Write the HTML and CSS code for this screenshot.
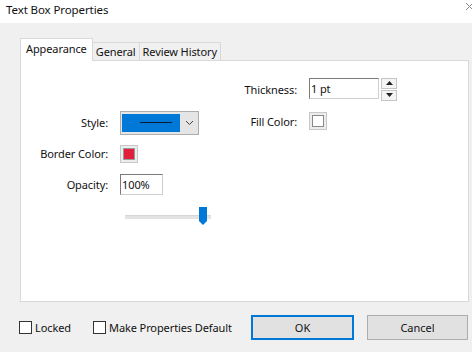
FILE: index.html
```html
<!DOCTYPE html>
<html>
<head>
<title>Text Box Properties</title>
<link rel="stylesheet" href="styles.css">
</head>
<body>

<div class="dialog">
  <div class="titlebar">
    <span class="title">Text Box Properties</span>
    <svg class="close" width="6" height="9" viewBox="0 0 6 9"><path d="M0 1 L7 8 M0 8 L7 1" stroke="#888" stroke-width="1" fill="none"/></svg>
  </div>

  <div class="content">
    <div class="tabs">
      <div class="tab active">Appearance</div>
      <div class="tab">General</div>
      <div class="tab">Review History</div>
    </div>

    <div class="panel">
      <div class="col left-col">
        <label>Style:</label>
        <div class="dropdown">
          <div class="line-preview"><span></span></div>
          <div class="chevron">
            <svg width="9" height="6" viewBox="0 0 9 6"><path d="M1 1 L4.5 4.5 L8 1" fill="none" stroke="#444" stroke-width="1"/></svg>
          </div>
        </div>

        <label>Border Color:</label>
        <div class="swatch"><span class="red"></span></div>

        <label>Opacity:</label>
        <input class="field opacity" type="text" value="100%">

        <span></span>
        <div class="slider">
          <div class="track"></div>
          <svg class="thumb" width="8" height="18" viewBox="0 0 8 18"><path d="M0 0 H8 V14 L4 18 L0 14 Z" fill="#0078d7"/></svg>
        </div>
      </div>

      <div class="col right-col">
        <label>Thickness:</label>
        <div class="spin">
          <input class="field thickness" type="text" value="1 pt">
          <div class="spin-btns">
            <div class="spin-btn"><svg width="7" height="4" viewBox="0 0 7 4"><path d="M0 4 L3.5 0 L7 4 Z" fill="#222"/></svg></div>
            <div class="spin-btn"><svg width="7" height="4" viewBox="0 0 7 4"><path d="M0 0 L3.5 4 L7 0 Z" fill="#222"/></svg></div>
          </div>
        </div>

        <label>Fill Color:</label>
        <div class="swatch"><span class="empty"></span></div>
      </div>
    </div>

    <div class="footer">
      <label class="check locked"><span class="box"></span>Locked</label>
      <label class="check"><span class="box"></span>Make Properties Default</label>
      <div class="buttons">
        <button class="btn default">OK</button>
        <button class="btn">Cancel</button>
      </div>
    </div>
  </div>
</div>

</body>
</html>
```

FILE: styles.css
```css
body {
  margin: 0;
  background: #fff;
  font-family: "Noto Sans", "Open Sans", sans-serif;
  font-size: 11px;
  letter-spacing: -0.1px;
  color: #111;
}

.dialog {
  width: 472px;
  height: 352px;
  display: flex;
  flex-direction: column;
  overflow: hidden;
}

.titlebar {
  height: 24px;
  background: #fff;
  display: flex;
  align-items: center;
  justify-content: space-between;
  padding-left: 6px;
}

.title { margin-top: -4px; font-size: 11.5px; }

.close {
  margin-top: -10px;
  flex-shrink: 0;
}

.content {
  flex: 1;
  background: #f0f0f0;
  padding: 16px 3px 0 20px;
}

.tabs {
  display: flex;
  align-items: flex-end;
  height: 21px;
}

.tab {
  height: 17px;
  line-height: 17px;
  padding: 0 3px;
  border: 1px solid #d9d9d9;
  border-bottom: none;
  background: #f0f0f0;
  margin-left: -1px;
}

.tab:first-child { margin-left: 0; }

.tab.active {
  height: 22px;
  line-height: 19px;
  padding: 0 5px;
  background: #fff;
  position: relative;
  z-index: 1;
  margin-bottom: -1px;
}

.panel {
  height: 240px;
  background: #fff;
  border: 1px solid #d9d9d9;
  display: flex;
  align-items: flex-start;
}

.col {
  display: grid;
  column-gap: 12px;
  align-items: center;
}

.col label { text-align: right; }

.left-col {
  grid-template-columns: 87px 78px;
  grid-auto-rows: 31px;
  padding-top: 46px;
}

.right-col {
  grid-template-columns: 99px auto;
  grid-auto-rows: 32px;
  padding-top: 12px;
}

.dropdown {
  width: 76px;
  height: 20px;
  border: 1px solid #adadad;
  background: #e5e5e5;
  display: flex;
  align-items: center;
  padding: 1px 0 1px 1px;
}

.line-preview {
  width: 58px;
  height: 18px;
  background: #0078d7;
  display: flex;
  align-items: center;
  justify-content: flex-end;
  padding-right: 8px;
  box-sizing: border-box;
}

.line-preview span {
  width: 32px;
  height: 1px;
  background: #0a1a2e;
}

.chevron {
  flex: 1;
  display: flex;
  justify-content: center;
  align-items: center;
}

.swatch {
  width: 18px;
  height: 18px;
  box-sizing: border-box;
  border: 1px solid #c8c8c8;
  background: #ececec;
  display: flex;
  align-items: center;
  justify-content: center;
}

.swatch span {
  width: 12px;
  height: 12px;
  box-sizing: border-box;
}

.swatch .red { background: #e0203a; border: 1px solid #9a9a9a; }
.swatch .empty { background: #fff; border: 1px solid #8a8a8a; }

.field {
  font-family: inherit;
  font-size: 11px;
  letter-spacing: -0.1px;
  height: 21px;
  box-sizing: border-box;
  border: 1px solid #7a7a7a;
  border-right-color: #cfcfcf;
  border-bottom-color: #cfcfcf;
  padding: 0 1px;
  outline: none;
  background: #fff;
  color: #111;
}

.opacity { width: 43px; }

.thickness { width: 70px; }

.spin {
  display: flex;
  gap: 2px;
}

.spin-btns {
  display: flex;
  flex-direction: column;
  gap: 1px;
}

.spin-btn {
  width: 14px;
  height: 9px;
  border: 1px solid #c5c5c5;
  background: #f4f4f4;
  display: flex;
  align-items: center;
  justify-content: center;
}

.slider {
  position: relative;
  width: 86px;
  height: 18px;
  margin-left: 5px;
}

.track {
  position: absolute;
  left: 0;
  right: 0;
  top: 8px;
  height: 3px;
  background: #e3e3e3;
  border-top: 1px solid #d6d6d6;
}

.thumb {
  position: absolute;
  left: 74px;
  top: 0;
}

.footer {
  display: flex;
  align-items: center;
  height: 50px;
}

.check {
  display: flex;
  align-items: center;
  gap: 3px;
  white-space: nowrap;
  flex-shrink: 0;
}

.check.locked {
  margin-left: -1px;
  width: 74px;
}

.box {
  width: 13px;
  height: 13px;
  box-sizing: border-box;
  border: 1px solid #333;
  background: #fff;
}

.buttons {
  margin-left: auto;
  display: flex;
  gap: 13px;
  margin-right: 1px;
  flex-shrink: 0;
}

.btn {
  width: 101px;
  height: 25px;
  font-family: inherit;
  font-size: 11px;
  background: #e1e1e1;
  border: 1px solid #adadad;
  color: #111;
  padding: 0;
}

.btn.default {
  border: 2px solid #0078d7;
  width: 103px;
}
```
